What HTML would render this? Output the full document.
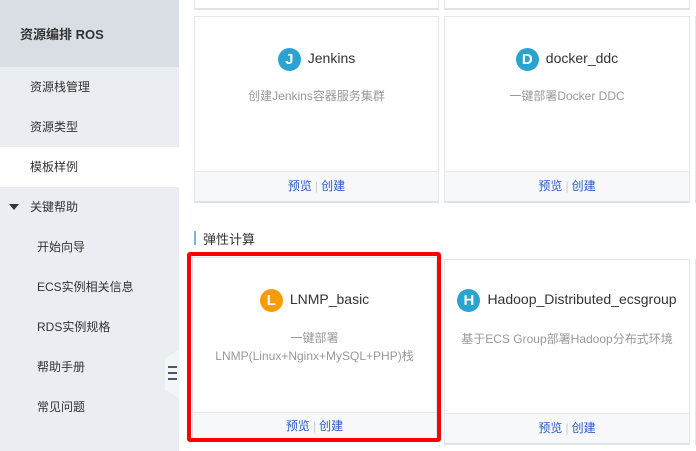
<!DOCTYPE html><html><head><meta charset="utf-8"><style>
*{margin:0;padding:0;box-sizing:border-box}
body{width:696px;height:451px;overflow:hidden;position:relative;background:#fff;font-family:"Liberation Sans","Noto Sans CJK SC",sans-serif;}
.side{position:absolute;left:0;top:0;width:179px;height:451px;background:#eaedf1}
.hd{height:67px;background:#d9dee4;font-size:13px;font-weight:bold;color:#333;padding:24px 0 0 20px}
.it{position:absolute;left:0;width:179px;height:40px;line-height:40px;font-size:12px;color:#333}
.card{position:absolute;background:#fff;border:1px solid #e3e6ea;border-bottom:2px solid #dfe3e8}
.t{position:absolute;left:0;right:0;text-align:center;font-size:14px;color:#333;white-space:nowrap}
.ic{display:inline-block;width:23px;height:23px;border-radius:50%;color:#fff;font-weight:bold;font-size:15px;line-height:23px;text-align:center;vertical-align:middle;margin-right:7px}
.d{position:absolute;left:0;right:0;text-align:center;font-size:12px;color:#999;line-height:18px}
.f{position:absolute;left:0;right:0;bottom:0;height:30px;background:#f7f8fa;border-top:1px solid #e3e6ea;text-align:center;font-size:12px;line-height:28px;color:#2a59c7}
.f span{color:#ccc;margin:0 3px}
</style></head><body>
<div class="side"><div class="hd">资源编排 ROS</div>
<div class="it" style="top:67px;padding-left:30px">资源栈管理</div>
<div class="it" style="top:107px;padding-left:30px">资源类型</div>
<div class="it" style="top:147px;padding-left:30px;background:#fff">模板样例</div>
<div class="it" style="top:187px;padding-left:30px"><span style="position:absolute;left:9px;top:17px;border-left:5px solid transparent;border-right:5px solid transparent;border-top:6px solid #333"></span>关键帮助</div>
<div class="it" style="top:227px;padding-left:37px">开始向导</div>
<div class="it" style="top:267px;padding-left:37px">ECS实例相关信息</div>
<div class="it" style="top:307px;padding-left:37px">RDS实例规格</div>
<div class="it" style="top:347px;padding-left:37px">帮助手册</div>
<div class="it" style="top:387px;padding-left:37px">常见问题</div>
</div>
<svg style="position:absolute;left:165px;top:350px" width="14" height="48"><polygon points="14,0 0,8 0,40 14,48" fill="#f3f5f7"/><rect x="3" y="16" width="9" height="2" fill="#4a5566"/><rect x="3" y="22" width="9" height="2" fill="#4a5566"/><rect x="3" y="28" width="9" height="2" fill="#4a5566"/></svg>
<div class="card" style="left:194px;top:-10px;width:245px;height:20px"></div>
<div class="card" style="left:444px;top:-10px;width:246px;height:20px"></div>
<div class="card" style="left:194px;top:16px;width:245px;height:187px">
<div class="t" style="top:31px"><span class="ic" style="background:#2aa3cf">J</span>Jenkins</div>
<div class="d" style="top:70px">创建Jenkins容器服务集群</div>
<div class="f">预览<span>|</span>创建</div></div>
<div class="card" style="left:444px;top:16px;width:246px;height:187px">
<div class="t" style="top:31px"><span class="ic" style="background:#2aa3cf">D</span>docker_ddc</div>
<div class="d" style="top:70px">一键部署Docker DDC</div>
<div class="f">预览<span>|</span>创建</div></div>
<div class="card" style="left:695px;top:16px;width:10px;height:187px"></div>
<div style="position:absolute;left:194px;top:231px;width:2px;height:14px;background:#7fb0de"></div>
<div style="position:absolute;left:203px;top:229px;font-size:13px;color:#333">弹性计算</div>
<div class="card" style="left:192px;top:257px;width:245px;height:183px">
<div class="t" style="top:31px"><span class="ic" style="background:#f89b0a">L</span>LNMP_basic</div>
<div class="d" style="top:71px">一键部署<br>LNMP(Linux+Nginx+MySQL+PHP)栈</div>
<div class="f" style="height:26px;line-height:26px">预览<span>|</span>创建</div></div>
<div style="position:absolute;left:187px;top:252px;width:254px;height:190px;border:4px solid #f00;border-radius:3px"></div>
<div class="card" style="left:444px;top:259px;width:246px;height:186px">
<div class="t" style="top:29px"><span class="ic" style="background:#2aa3cf">H</span>Hadoop_Distributed_ecsgroup</div>
<div class="d" style="top:70px">基于ECS Group部署Hadoop分布式环境</div>
<div class="f">预览<span>|</span>创建</div></div>
<div class="card" style="left:695px;top:259px;width:10px;height:186px"></div>
</body></html>
